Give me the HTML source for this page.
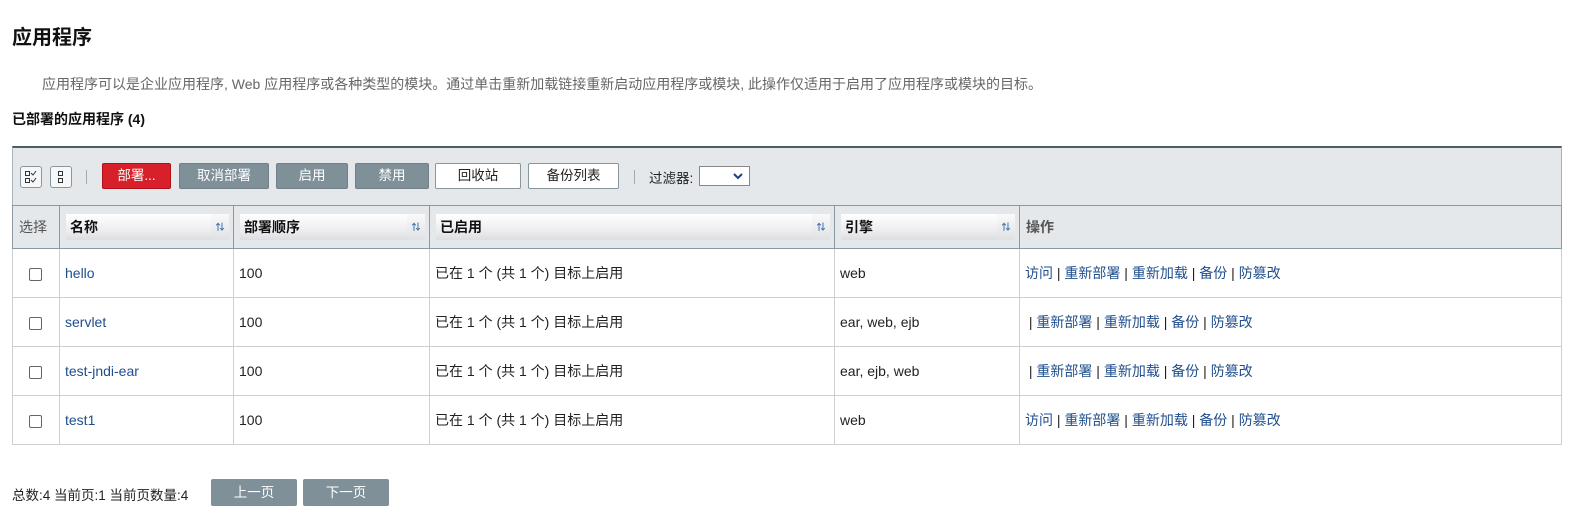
<!DOCTYPE html>
<html><head><meta charset="utf-8"><style>
*{box-sizing:border-box;margin:0;padding:0}
body{width:1578px;height:514px;background:#fff;font-family:"Liberation Sans","Noto Sans CJK SC",sans-serif;font-size:14px;color:#222;position:relative;overflow:hidden}
.a{position:absolute}
h1{position:absolute;left:12px;top:21px;font-size:20px;font-weight:bold;color:#111}
.desc{left:42px;top:74px;color:#666;font-size:14px}
.sub{left:12px;top:109px;font-weight:bold;font-size:14px;color:#111}
.tb{left:12px;top:146px;width:1550px;height:59px;background:#e4e8eb;border-top:2px solid #4d5d67;border-left:1px solid #a8b2b8;border-right:1px solid #a8b2b8}
.btn{position:absolute;top:15px;height:26px;line-height:24px;text-align:center;font-size:13.5px;border-radius:2px}
.g{background:#7f9099;color:#fff;border:1px solid #6f8089}
.w{background:#fff;color:#222;border:1px solid #8a969d}
.r{background:#d7202a;color:#fff;border:1px solid #b01018}
.ic{position:absolute;top:18px;width:22px;height:22px;border:1px solid #8a969d;border-radius:3px;background:#f6f7f8}
.sep{position:absolute;top:22px;width:1px;height:14px;background:#aaa}
table{position:absolute;left:12px;top:205px;border-collapse:collapse;width:1550px;table-layout:fixed}
th{height:43px;background:#e4e8eb;border:1px solid #8a9aa3;text-align:left;font-weight:bold;font-size:14px;padding:0;position:relative}
td{height:49px;border:1px solid #cfcfcf;padding:0 5px;white-space:nowrap}
.hb{position:absolute;left:6px;right:22px;top:8px;height:26px;background:linear-gradient(#fff,#ebebee 70%,#dcdde0);line-height:26px;padding-left:4px;color:#111}
.st{position:absolute;right:4px;top:8px;width:18px;height:26px;background:linear-gradient(#fafafa,#e0e1e4);font-size:9px;color:#3a6ca8;text-align:center;line-height:26px}
a{color:#1f4e8c;text-decoration:none}
.cb{display:inline-block;width:13px;height:13px;border:1px solid #666;border-radius:2px;background:#fff;margin-left:11px;vertical-align:middle}
.pg{top:479px;height:27px;line-height:27px;width:86px;text-align:center;background:#7f9099;color:#fff;border-radius:2px;font-size:13.5px}
</style></head><body>
<h1>应用程序</h1>
<div class="a desc">应用程序可以是企业应用程序, Web 应用程序或各种类型的模块。通过单击重新加载链接重新启动应用程序或模块, 此操作仅适用于启用了应用程序或模块的目标。</div>
<div class="a sub">已部署的应用程序 (4)</div>
<div class="a tb">
<div class="ic" style="left:7px"><svg width="20" height="20" viewBox="0 0 20 20" fill="none" stroke="#333" stroke-width="1"><rect x="4.5" y="4.5" width="4" height="4"/><rect x="4.5" y="11.5" width="4" height="4"/><path d="M10 6l2 2 3-4M10 13l2 2 3-4"/></svg></div>
<div class="ic" style="left:37px"><svg width="20" height="20" viewBox="0 0 20 20" fill="none" stroke="#333" stroke-width="1"><rect x="7.5" y="4.5" width="4" height="4"/><rect x="7.5" y="11.5" width="4" height="4"/></svg></div>
<div class="sep" style="left:73px"></div>
<div class="btn r" style="left:89px;width:69px">部署...</div>
<div class="btn g" style="left:166px;width:90px">取消部署</div>
<div class="btn g" style="left:263px;width:72px">启用</div>
<div class="btn g" style="left:342px;width:74px">禁用</div>
<div class="btn w" style="left:422px;width:86px">回收站</div>
<div class="btn w" style="left:515px;width:91px">备份列表</div>
<div class="sep" style="left:621px"></div>
<div class="a" style="left:636px;top:19px;font-size:13.5px">过滤器:</div>
<div class="a" style="left:686px;top:18px;width:51px;height:20px;background:#fff;border:1px solid #888"><svg class="a" style="left:33px;top:5px" width="10" height="8" viewBox="0 0 10 8"><path d="M1 2l4 4 4-4" fill="none" stroke="#1f3e7c" stroke-width="2"/></svg></div>
</div>
<table>
<colgroup><col style="width:47px"><col style="width:174px"><col style="width:196px"><col style="width:405px"><col style="width:185px"><col></colgroup>
<tr><th style="color:#555;font-weight:normal;padding-left:6px">选择</th>
<th><div class="hb">名称</div><div class="st">⇅</div></th>
<th><div class="hb">部署顺序</div><div class="st">⇅</div></th>
<th><div class="hb">已启用</div><div class="st">⇅</div></th>
<th><div class="hb">引擎</div><div class="st">⇅</div></th>
<th style="color:#555;padding-left:6px">操作</th></tr>
<tr><td><span class="cb"></span></td><td><a>hello</a></td><td>100</td><td>已在 1 个 (共 1 个) 目标上启用</td><td>web</td><td><a>访问</a> | <a>重新部署</a> | <a>重新加载</a> | <a>备份</a> | <a>防篡改</a></td></tr>
<tr><td><span class="cb"></span></td><td><a>servlet</a></td><td>100</td><td>已在 1 个 (共 1 个) 目标上启用</td><td>ear, web, ejb</td><td>&nbsp;| <a>重新部署</a> | <a>重新加载</a> | <a>备份</a> | <a>防篡改</a></td></tr>
<tr><td><span class="cb"></span></td><td><a>test-jndi-ear</a></td><td>100</td><td>已在 1 个 (共 1 个) 目标上启用</td><td>ear, ejb, web</td><td>&nbsp;| <a>重新部署</a> | <a>重新加载</a> | <a>备份</a> | <a>防篡改</a></td></tr>
<tr><td><span class="cb"></span></td><td><a>test1</a></td><td>100</td><td>已在 1 个 (共 1 个) 目标上启用</td><td>web</td><td><a>访问</a> | <a>重新部署</a> | <a>重新加载</a> | <a>备份</a> | <a>防篡改</a></td></tr>
</table>
<div class="a" style="left:12px;top:484px;font-size:13.5px">总数:4 当前页:1 当前页数量:4</div>
<div class="a pg" style="left:211px">上一页</div>
<div class="a pg" style="left:303px">下一页</div>
</body></html>
